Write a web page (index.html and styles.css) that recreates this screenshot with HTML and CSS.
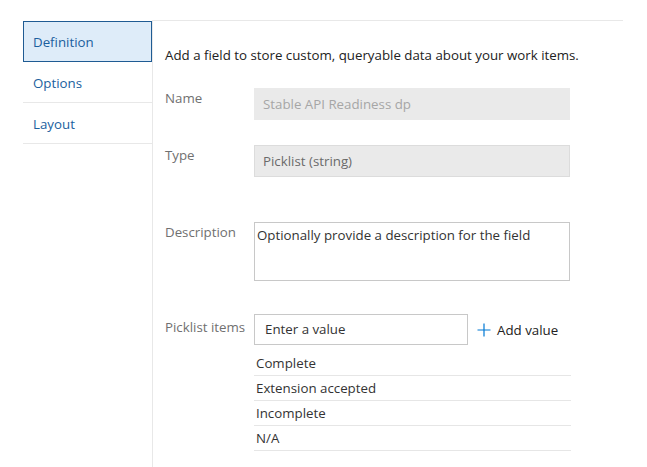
FILE: index.html
```html
<!DOCTYPE html>
<html lang="en">
<head>
    <meta charset="UTF-8">
    <title>Field Definition</title>
    <link rel="stylesheet" href="styles.css">
</head>
<body>
    <div class="layout">
        <div class="sidebar">
            <div class="tab active">Definition</div>
            <div class="tab">Options</div>
            <div class="tab">Layout</div>
        </div>
        <div class="main">
            <p class="intro">Add a field to store custom, queryable data about your work items.</p>

            <div class="row row-name">
                <label>Name</label>
                <div class="input disabled">Stable API Readiness dp</div>
            </div>

            <div class="row row-type">
                <label>Type</label>
                <div class="input readonly">Picklist (string)</div>
            </div>

            <div class="row row-desc">
                <label>Description</label>
                <div class="textarea">Optionally provide a description for the field</div>
            </div>

            <div class="row row-pick">
                <label>Picklist items</label>
                <div class="picklist">
                    <div class="add-line">
                        <div class="value-input">Enter a value</div>
                        <span class="add-btn">
                            <svg width="14" height="14" viewBox="0 0 14 14"><path d="M7 0.5V13.5M0.5 7H13.5" stroke="#0078d4" stroke-width="1.2" fill="none"/></svg>
                            Add value
                        </span>
                    </div>
                    <div class="items">
                        <div class="item">Complete</div>
                        <div class="item">Extension accepted</div>
                        <div class="item">Incomplete</div>
                        <div class="item">N/A</div>
                    </div>
                </div>
            </div>
        </div>
    </div>
</body>
</html>
```
FILE: styles.css
```css
body {
    font-family: "Open Sans", "Noto Sans", sans-serif;
    font-size: 13.3px;
    color: #333;
    margin: 0;
    background: #fff;
}
.layout {
    display: flex;
    padding: 20px 0 0 23px;
    height: 447px;
}
.sidebar {
    width: 129px;
    padding-top: 1px;
    border-right: 1px solid #e8e8e8;
}
.tab {
    height: 40px;
    line-height: 42px;
    padding-left: 10px;
    border-bottom: 1px solid #e8e8e8;
    color: #1b5f9e;
}
.tab.active {
    height: 39px;
    line-height: 41px;
    padding-left: 9px;
    background: #deecf9;
    border: 1px solid #1f5b93;
}
.main {
    width: 458px;
    border-top: 1px solid #e8e8e8;
    padding-left: 12px;
}
.intro {
    margin: 24px 0 0 0;
    line-height: 20px;
    color: #222;
}
.row {
    display: flex;
}
.row label {
    width: 89px;
    color: #707070;
    padding-top: 1px;
    line-height: 18px;
}
.row-pick label {
    padding-top: 4px;
}
.row-name { margin-top: 23px; }
.row-type { margin-top: 25px; }
.row-desc { margin-top: 45px; }
.row-pick { margin-top: 33px; }
.input {
    width: 316px;
    height: 32px;
    line-height: 32px;
    padding-left: 9px;
    background: #eaeaea;
    box-sizing: border-box;
}
.input.disabled {
    color: #a6a6a6;
}
.input.readonly {
    border: 1px solid #dcdcdc;
    line-height: 30px;
    padding-left: 8px;
    color: #6a6a6a;
}
.textarea {
    width: 316px;
    height: 59px;
    box-sizing: border-box;
    border: 1px solid #c8c8c8;
    padding: 2px 2px;
    line-height: 20px;
}
.picklist {
    width: 317px;
}
.add-line {
    display: flex;
    align-items: center;
}
.value-input {
    width: 214px;
    height: 31px;
    line-height: 29px;
    box-sizing: border-box;
    border: 1px solid #c8c8c8;
    padding-left: 10px;
}
.add-btn {
    display: flex;
    align-items: center;
    gap: 6px;
    margin-left: 9px;
    color: #222;
}
.items {
    margin-top: 6px;
}
.item {
    height: 24px;
    line-height: 24px;
    padding-left: 2px;
    border-bottom: 1px solid #e6e6e6;
}
```
